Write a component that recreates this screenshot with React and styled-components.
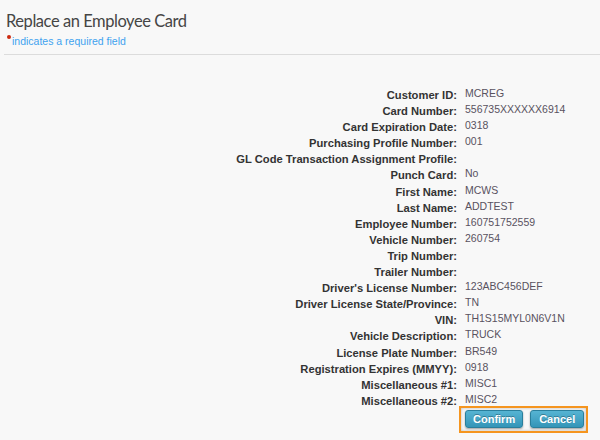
import React from "react";
import styled, { createGlobalStyle } from "styled-components";

const Global = createGlobalStyle`
  html, body { margin: 0; padding: 0; background: #f8f8f8; }
  body { font-family: "Liberation Sans", Arial, sans-serif; }
`;

const Page = styled.div`
  width: 600px;
  height: 440px;
  overflow: hidden;
  background: #f8f8f8;
`;

const Header = styled.div`
  padding: 10px 0 0 6px;
`;

const Title = styled.h1`
  margin: 0;
  font-family: "Lato", "Open Sans", sans-serif;
  font-weight: 400;
  font-size: 16.5px;
  letter-spacing: -0.45px;
  line-height: 22px;
  color: #454545;
`;

const Required = styled.div`
  margin-top: 3px;
  font-size: 10.5px;
  line-height: 13px;
  color: #3ea2ef;
  display: flex;
  align-items: flex-start;
`;

const Dot = styled.span`
  width: 4px;
  height: 4px;
  border-radius: 50%;
  background: #cc2a10;
  margin: 0 1px 0 1px;
`;

const Divider = styled.hr`
  margin: 6px 0 0 4px;
  border: 0;
  border-top: 1px solid #dcdcdc;
`;

const Grid = styled.div`
  display: grid;
  grid-template-columns: 453px 1fr;
  column-gap: 8px;
  padding: 32px 0 0 4px;
`;

const Label = styled.div`
  text-align: right;
  font-weight: 700;
  font-size: 11.2px;
  line-height: 16px;
  height: 16.1px;
  color: #333;
  white-space: nowrap;
`;

const Value = styled.div`
  font-size: 10.5px;
  line-height: 12px;
  height: 16.1px;
  color: #58525f;
  white-space: nowrap;
`;

const ActionBox = styled.div`
  grid-column: 2;
  justify-self: start;
  margin: -3px 0 0 -6px;
  display: flex;
  gap: 7px;
  padding: 2px 2px 3px 4px;
  border: 2px solid #f5951f;
  box-shadow: inset 0 0 3px rgba(0, 0, 0, 0.25);
`;

const Button = styled.button`
  height: 18px;
  padding: 0 ${(p) => p.$pad}px;
  border: 1px solid #2a7f9c;
  border-radius: 3px;
  background: linear-gradient(#56b4d3, #3495b8);
  color: #fff;
  font-family: "Liberation Sans", Arial, sans-serif;
  font-weight: 700;
  font-size: 11px;
  line-height: 16px;
  text-shadow: 0 -1px 0 rgba(0, 0, 0, 0.3);
  box-shadow: 0 1px 2px rgba(0, 0, 0, 0.35);
  cursor: pointer;
`;

const rows = [
  ["Customer ID:", "MCREG"],
  ["Card Number:", "556735XXXXXX6914"],
  ["Card Expiration Date:", "0318"],
  ["Purchasing Profile Number:", "001"],
  ["GL Code Transaction Assignment Profile:", ""],
  ["Punch Card:", "No"],
  ["First Name:", "MCWS"],
  ["Last Name:", "ADDTEST"],
  ["Employee Number:", "160751752559"],
  ["Vehicle Number:", "260754"],
  ["Trip Number:", ""],
  ["Trailer Number:", ""],
  ["Driver's License Number:", "123ABC456DEF"],
  ["Driver License State/Province:", "TN"],
  ["VIN:", "TH1S15MYL0N6V1N"],
  ["Vehicle Description:", "TRUCK"],
  ["License Plate Number:", "BR549"],
  ["Registration Expires (MMYY):", "0918"],
  ["Miscellaneous #1:", "MISC1"],
  ["Miscellaneous #2:", "MISC2"],
];

export default function App() {
  return (
    <Page>
      <Global />
      <Header>
        <Title>Replace an Employee Card</Title>
        <Required>
          <Dot />
          indicates a required field
        </Required>
      </Header>
      <Divider />
      <Grid>
        {rows.map(([l, v]) => (
          <React.Fragment key={l}>
            <Label>{l}</Label>
            <Value>{v}</Value>
          </React.Fragment>
        ))}
        <ActionBox>
          <Button $pad={7}>Confirm</Button>
          <Button $pad={8}>Cancel</Button>
        </ActionBox>
      </Grid>
    </Page>
  );
}
